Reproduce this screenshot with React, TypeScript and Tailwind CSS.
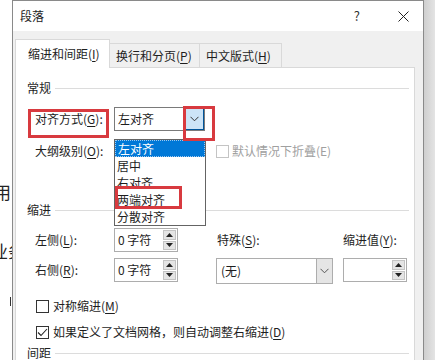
import React from 'react';

const FONT = { fontFamily: '"Noto Sans CJK SC", "Microsoft YaHei", sans-serif' };

// Label with underlined access key, e.g. 对齐方式(G):
const Key = ({ text, k, tail = '' }: { text: string; k: string; tail?: string }) => (
  <span className="whitespace-nowrap">
    {text}(<span className="underline underline-offset-2">{k}</span>){tail}
  </span>
);

const Chevron = ({ color = '#333' }: { color?: string }) => (
  <svg width="9" height="6" viewBox="0 0 9 6">
    <path d="M0.5 0.8 L4.5 4.8 L8.5 0.8" fill="none" stroke={color} strokeWidth="1" />
  </svg>
);

const GroupHeader = ({ title }: { title: string }) => (
  <div className="flex items-center h-[20px] pl-[11px] pr-[5px]">
    <span className="text-[12px] text-[#1e1e1e]">{title}</span>
    <div className="flex-1 h-px bg-[#dcdcdc] ml-[4px]" />
  </div>
);

const Spinner = () => (
  <div className="flex flex-col w-[13px] h-[20px] gap-[1px]">
    {[0, 1].map((i) => (
      <div
        key={i}
        className="flex-1 flex items-center justify-center bg-[#e5e5e5] border border-[#c4c4c4]"
      >
        <svg width="7" height="4" viewBox="0 0 7 4">
          <path d={i === 0 ? 'M0 4 L3.5 0 L7 4 Z' : 'M0 0 L3.5 4 L7 0 Z'} fill="#222" />
        </svg>
      </div>
    ))}
  </div>
);

const SpinBox = ({ value }: { value: string }) => (
  <div className="w-[64px] h-[24px] border border-[#adadad] bg-white flex items-center justify-between pl-[3px] pr-[1px]">
    <span className="text-[12px] text-[#1e1e1e]">{value}</span>
    <Spinner />
  </div>
);

const CheckBox = ({ checked, disabled }: { checked?: boolean; disabled?: boolean }) => (
  <div
    className={`w-[13px] h-[13px] border bg-white flex items-center justify-center ${
      disabled ? 'border-[#c4c4c4]' : 'border-[#333]'
    }`}
  >
    {checked && (
      <svg width="11" height="9" viewBox="0 0 11 9">
        <path d="M1 4.5 L4 7.5 L10 1" fill="none" stroke="#222" strokeWidth="1.1" />
      </svg>
    )}
  </div>
);

export default function App() {
  const items = ['左对齐', '居中', '右对齐', '两端对齐', '分散对齐'];

  return (
    <div className="relative w-[435px] h-[360px] overflow-hidden bg-[#e2e2e2] flex flex-col" style={FONT}>
      <div className="h-[5px] bg-[#e6e6e6]" />
      <div className="flex flex-1">
        {/* document page behind the dialog */}
        <div className="w-[12px] bg-white overflow-hidden flex flex-col">
          <div className="mt-[182px] ml-[-6px] text-[17px] leading-[20px] text-[#222] whitespace-nowrap">用，</div>
          <div className="mt-[39px] ml-[-9px] text-[17px] leading-[20px] text-[#222] whitespace-nowrap">业务</div>
          <div className="mt-[36px] ml-[10px] w-px h-[9px] bg-[#333]" />
        </div>

        {/* dialog */}
        <div className="w-[412px] border-l border-r border-t border-[#8a8a8a] bg-[#f0f0f0] flex flex-col">
          <div className="h-[30px] bg-white flex items-center pl-[7px] pr-[14px]">
            <span className="text-[12px] text-[#1e1e1e] flex-1">段落</span>
            <span className="text-[13px] text-[#333] mr-[38px]">?</span>
            <svg width="11" height="11" viewBox="0 0 11 11">
              <path d="M0.5 0.5 L10.5 10.5 M10.5 0.5 L0.5 10.5" stroke="#222" strokeWidth="1" />
            </svg>
          </div>

          <div className="flex-1 flex flex-col pt-[8px] pl-[2px] pr-[8px]">
            {/* tabs */}
            <div className="h-[28px] flex items-end text-[12px] text-[#1e1e1e]">
              <div className="relative z-10 w-[95px] h-[29px] -mb-px bg-white border border-b-0 border-[#d9d9d9] flex items-center pl-[12px]">
                <Key text="缩进和间距" k="I" />
              </div>
              <div className="w-[90px] h-[24px] bg-[#f0f0f0] border border-l-0 border-b-0 border-[#d9d9d9] flex items-center pl-[6px]">
                <Key text="换行和分页" k="P" />
              </div>
              <div className="w-[82px] h-[24px] bg-[#f0f0f0] border border-l-0 border-b-0 border-[#d9d9d9] flex items-center pl-[6px]">
                <Key text="中文版式" k="H" />
              </div>
            </div>

            {/* tab panel */}
            <div className="flex-1 bg-white border border-[#d9d9d9] text-[12px] text-[#1e1e1e] flex flex-col pt-[10px]">
              <GroupHeader title="常规" />

              <div className="mt-[9px] h-[24px] flex items-center pl-[19px]">
                <div className="w-[79px]">
                  <Key text="对齐方式" k="G" tail=":" />
                </div>
                <div className="w-[91px] h-[24px] border border-[#7a7a7a] bg-white flex items-center justify-between pl-[3px]">
                  <span>左对齐</span>
                  <div className="w-[19px] h-[22px] bg-[#cce4f7] border border-[#005499] flex items-center justify-center">
                    <Chevron />
                  </div>
                </div>
              </div>

              <div className="mt-[10px] h-[20px] flex items-center pl-[19px]">
                <div className="w-[181px]">
                  <Key text="大纲级别" k="O" tail=":" />
                </div>
                <CheckBox disabled />
                <span className="ml-[3px] text-[#a0a0a0]">默认情况下折叠(E)</span>
              </div>

              <div className="mt-[39px]">
                <GroupHeader title="缩进" />
              </div>

              <div className="mt-[8px] flex pl-[19px]">
                <div className="w-[143px] flex flex-col gap-[6px]">
                  <div className="h-[24px] flex items-center">
                    <div className="w-[79px]">
                      <Key text="左侧" k="L" tail=":" />
                    </div>
                    <SpinBox value="0 字符" />
                  </div>
                  <div className="h-[24px] flex items-center">
                    <div className="w-[79px]">
                      <Key text="右侧" k="R" tail=":" />
                    </div>
                    <SpinBox value="0 字符" />
                  </div>
                </div>
                <div className="ml-[38px] w-[117px] flex flex-col gap-[6px]">
                  <div className="h-[24px] flex items-center pl-[1px]">
                    <Key text="特殊" k="S" tail=":" />
                  </div>
                  <div className="h-[26px] border border-[#adadad] bg-white flex items-center justify-between pl-[4px]">
                    <span>(无)</span>
                    <div className="w-[16px] h-full bg-[#e5e5e5] border-l border-[#adadad] flex items-center justify-center">
                      <Chevron color="#555" />
                    </div>
                  </div>
                </div>
                <div className="ml-[10px] w-[64px] flex flex-col gap-[6px]">
                  <div className="h-[24px] flex items-center">
                    <Key text="缩进值" k="Y" tail=":" />
                  </div>
                  <SpinBox value="" />
                </div>
              </div>

              <div className="mt-[12px] h-[20px] flex items-center pl-[20px]">
                <CheckBox />
                <span className="ml-[4px]">
                  <Key text="对称缩进" k="M" />
                </span>
              </div>
              <div className="mt-[6px] h-[20px] flex items-center pl-[20px]">
                <CheckBox checked />
                <span className="ml-[4px]">
                  <Key text="如果定义了文档网格，则自动调整右缩进" k="D" />
                </span>
              </div>
              <div className="mt-[1px]">
                <GroupHeader title="间距" />
              </div>
            </div>
          </div>
        </div>

        <div className="flex-1 bg-gradient-to-r from-[#cfcfcf] to-[#e4e4e4]" />
      </div>

      {/* open dropdown list */}
      <div className="absolute left-[114px] top-[139px] w-[92px] h-[87px] bg-white border border-[#646464] text-[12px] text-[#1e1e1e] flex flex-col">
        {items.map((it, i) => (
          <div
            key={it}
            className={`h-[17px] flex items-center pl-[2px] ${
              i === 0 ? 'bg-[#0078d7] text-white border border-dotted border-[#9ec9ef]' : ''
            }`}
          >
            {it}
          </div>
        ))}
      </div>

      {/* red annotation boxes */}
      <div className="absolute left-[28px] top-[109px] w-[81px] h-[29px] border-[3px] border-[#d83a3f]" />
      <div className="absolute left-[183px] top-[106px] w-[32px] h-[35px] border-[3px] border-[#d83a3f]" />
      <div className="absolute left-[115px] top-[186px] w-[67px] h-[23px] border-[3px] border-[#d83a3f]" />
    </div>
  );
}
